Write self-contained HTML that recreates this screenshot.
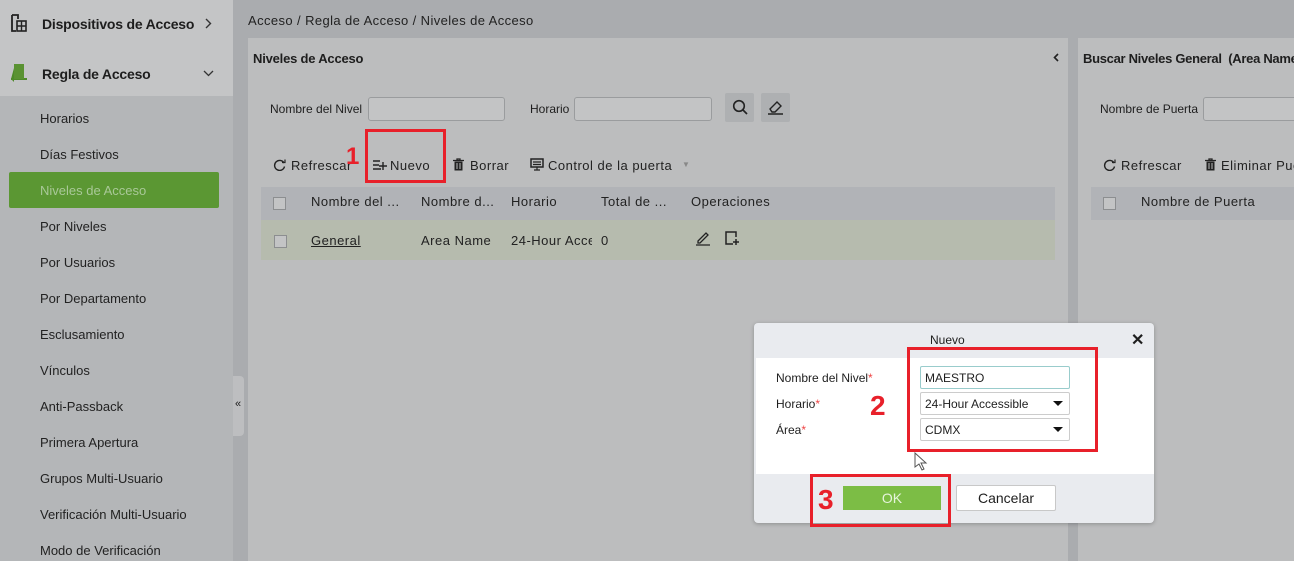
<!DOCTYPE html>
<html><head><meta charset="utf-8"><style>
*{box-sizing:border-box;margin:0;padding:0}
body{width:1294px;height:561px;overflow:hidden;background:#aaacaf;font-family:"Liberation Sans",sans-serif;color:#1e1e1e;position:relative;font-size:13px}
.a{position:absolute}
.side{left:0;top:0;width:233px;height:561px;background:#b4b6b8}
.sh{left:0;width:233px;height:48px;background:#c4c5c6;font-size:14px;font-weight:bold;color:#222}
.si{left:40px;font-size:13px;color:#222}
.panel{background:#bcbdbe}
.inp{background:#c3c4c5;border:1px solid #9a9c9e;border-radius:3px;height:24px}
.tb{letter-spacing:.5px;font-size:13px;color:#222;white-space:nowrap}
.chk{width:13px;height:13px;border:1px solid #8c8e90;background:#c3c4c5}
.red{border:3px solid #e8202a}
.num{color:#e8202a;font-weight:bold}
.lb{font-size:12px;white-space:nowrap}
</style></head><body>
<div class="a side"></div>
<div class="a sh" style="top:0"></div>
<div class="a sh" style="top:48px"></div>
<svg class="a" style="left:10px;top:14px" width="18" height="18" viewBox="0 0 18 18"><path d="M2 1h6v4M2 1v16h4" fill="none" stroke="#222" stroke-width="1.8"/><rect x="7" y="7" width="9" height="10" fill="none" stroke="#222" stroke-width="1.6"/><path d="M7 12h9M11.5 7v10" stroke="#222" stroke-width="1.4"/></svg>
<div class="a" style="left:42px;top:16px;font-size:14px;font-weight:bold;letter-spacing:-.2px">Dispositivos de Acceso</div>
<svg class="a" style="left:205px;top:18px" width="7" height="11"><path d="M1 1l4.5 4.5L1 10" fill="none" stroke="#333" stroke-width="1.4"/></svg>
<svg class="a" style="left:10px;top:63px" width="18" height="20" viewBox="0 0 18 20"><path d="M1 16h16" stroke="#4e8a2a" stroke-width="2"/><rect x="4" y="1" width="10" height="15" fill="#5a9232"/><path d="M1 16l3 3V5" fill="#4e8a2a"/></svg>
<div class="a" style="left:42px;top:66px;font-size:14px;font-weight:bold;letter-spacing:-.2px">Regla de Acceso</div>
<svg class="a" style="left:203px;top:70px" width="11" height="7"><path d="M1 1l4.5 4.5L10 1" fill="none" stroke="#333" stroke-width="1.3"/></svg>
<div class="a si" style="top:111px">Horarios</div>
<div class="a si" style="top:147px">Días Festivos</div>
<div class="a" style="left:9px;top:172px;width:210px;height:36px;background:#5b9733;border-radius:2px"></div>
<div class="a si" style="top:183px;color:#a9c898">Niveles de Acceso</div>
<div class="a si" style="top:219px">Por Niveles</div>
<div class="a si" style="top:255px">Por Usuarios</div>
<div class="a si" style="top:291px">Por Departamento</div>
<div class="a si" style="top:327px">Esclusamiento</div>
<div class="a si" style="top:363px">Vínculos</div>
<div class="a si" style="top:399px">Anti-Passback</div>
<div class="a si" style="top:435px">Primera Apertura</div>
<div class="a si" style="top:471px">Grupos Multi-Usuario</div>
<div class="a si" style="top:507px">Verificación Multi-Usuario</div>
<div class="a si" style="top:543px">Modo de Verificación</div>
<div class="a" style="left:233px;top:376px;width:11px;height:60px;background:#bdbec0;border-radius:0 4px 4px 0"></div>
<div class="a" style="left:235px;top:398px;font-size:11px">«</div>

<div class="a tb" style="left:248px;top:13px;letter-spacing:.4px">Acceso / Regla de Acceso / Niveles de Acceso</div>
<div class="a panel" style="left:248px;top:38px;width:820px;height:523px"></div>
<div class="a panel" style="left:1078px;top:38px;width:216px;height:523px"></div>
<div class="a" style="left:253px;top:51px;font-weight:bold;font-size:13px;letter-spacing:-.2px">Niveles de Acceso</div>
<svg class="a" style="left:1053px;top:53px" width="6" height="9"><path d="M5 1L1.5 4.5 5 8" fill="none" stroke="#222" stroke-width="1.6"/></svg>
<div class="a lb" style="left:270px;top:102px">Nombre del Nivel</div>
<div class="a inp" style="left:368px;top:97px;width:137px"></div>
<div class="a lb" style="left:530px;top:102px">Horario</div>
<div class="a inp" style="left:574px;top:97px;width:138px"></div>
<div class="a" style="left:725px;top:93px;width:29px;height:29px;background:#aeb0b2;border-radius:2px"></div>
<svg class="a" style="left:732px;top:99px" width="16" height="16"><circle cx="7" cy="7" r="5.3" fill="none" stroke="#222" stroke-width="1.6"/><path d="M11 11l4 4" stroke="#222" stroke-width="1.7"/></svg>
<div class="a" style="left:761px;top:93px;width:29px;height:29px;background:#aeb0b2;border-radius:2px"></div>
<svg class="a" style="left:767px;top:99px" width="17" height="16"><path d="M3 10l7-7 4 4-6 6H5zM1 15h15" fill="none" stroke="#222" stroke-width="1.4"/></svg>

<svg class="a" style="left:273px;top:158px" width="13" height="13"><path d="M11 5A5 5 0 1 0 11.5 8.5" fill="none" stroke="#222" stroke-width="1.4"/><path d="M9 4.5h3V1.5" fill="none" stroke="#222" stroke-width="1.2"/></svg>
<div class="a tb" style="left:291px;top:158px">Refrescar</div>
<svg class="a" style="left:372px;top:159px" width="15" height="12"><path d="M1 2h7M1 6h6M1 10h8M11 3v8M7 7h8" stroke="#222" stroke-width="1.4"/></svg>
<div class="a tb" style="left:390px;top:158px">Nuevo</div>
<svg class="a" style="left:453px;top:158px" width="11" height="13"><path d="M0 2.5h11M4 2.5V1h3v1.5" fill="none" stroke="#222" stroke-width="1.3"/><rect x="1.5" y="3.5" width="8" height="9" fill="#222"/><path d="M4 5v6M7 5v6" stroke="#bcbdbe" stroke-width="1"/></svg>
<div class="a tb" style="left:470px;top:158px">Borrar</div>
<svg class="a" style="left:530px;top:158px" width="14" height="13"><rect x="1" y="1" width="12" height="8" fill="none" stroke="#222" stroke-width="1.5"/><path d="M3 4h8M3 6.5h8M4 12h6M7 9v3" stroke="#222" stroke-width="1.2"/></svg>
<div class="a tb" style="left:548px;top:158px">Control de la puerta</div>
<div class="a" style="left:682px;top:160px;color:#888;font-size:8px">▼</div>

<div class="a" style="left:261px;top:187px;width:794px;height:33px;background:#b1b3b7"></div>
<div class="a" style="left:261px;top:220px;width:794px;height:40px;background:#b6bbae"></div>
<div class="a chk" style="left:273px;top:197px"></div>
<div class="a chk" style="left:274px;top:235px"></div>
<div class="a tb" style="left:311px;top:194px">Nombre del ...</div>
<div class="a tb" style="left:421px;top:194px">Nombre d...</div>
<div class="a tb" style="left:511px;top:194px">Horario</div>
<div class="a tb" style="left:601px;top:194px">Total de ...</div>
<div class="a tb" style="left:691px;top:194px">Operaciones</div>
<div class="a tb" style="left:311px;top:233px;text-decoration:underline">General</div>
<div class="a tb" style="left:421px;top:233px">Area Name</div>
<div class="a tb" style="left:511px;top:233px;width:81px;overflow:hidden">24-Hour Accessible</div>
<div class="a tb" style="left:601px;top:233px">0</div>
<svg class="a" style="left:695px;top:230px" width="16" height="16"><path d="M3 11l8-8 2 2-8 8H3zM1 15h14" fill="none" stroke="#222" stroke-width="1.3"/></svg>
<svg class="a" style="left:724px;top:230px" width="17" height="17"><path d="M9 14H2V2h10v5" fill="none" stroke="#222" stroke-width="1.5"/><path d="M12 9v6M9 12h6" stroke="#222" stroke-width="1.5"/></svg>

<div class="a" style="left:1083px;top:51px;font-weight:bold;white-space:nowrap;font-size:13px;letter-spacing:-.3px">Buscar Niveles General&nbsp; (Area Name)</div>
<div class="a lb" style="left:1100px;top:102px">Nombre de Puerta</div>
<div class="a inp" style="left:1203px;top:97px;width:110px"></div>
<svg class="a" style="left:1103px;top:158px" width="13" height="13"><path d="M11 5A5 5 0 1 0 11.5 8.5" fill="none" stroke="#222" stroke-width="1.4"/><path d="M9 4.5h3V1.5" fill="none" stroke="#222" stroke-width="1.2"/></svg>
<div class="a tb" style="left:1121px;top:158px">Refrescar</div>
<svg class="a" style="left:1205px;top:158px" width="11" height="13"><path d="M0 2.5h11M4 2.5V1h3v1.5" fill="none" stroke="#222" stroke-width="1.3"/><rect x="1.5" y="3.5" width="8" height="9" fill="#222"/><path d="M4 5v6M7 5v6" stroke="#bcbdbe" stroke-width="1"/></svg>
<div class="a tb" style="left:1221px;top:158px">Eliminar Puerta</div>
<div class="a" style="left:1091px;top:187px;width:210px;height:33px;background:#b1b3b7"></div>
<div class="a chk" style="left:1103px;top:197px"></div>
<div class="a tb" style="left:1141px;top:194px">Nombre de Puerta</div>

<div class="a red" style="left:365px;top:129px;width:81px;height:54px"></div>
<div class="a num" style="left:346px;top:143px;font-size:24px">1</div>

<div class="a" style="left:754px;top:323px;width:400px;height:200px;background:#e9ebef;border-radius:4px;box-shadow:0 1px 4px rgba(0,0,0,.25)"></div>
<div class="a" style="left:756px;top:358px;width:398px;height:116px;background:#fff"></div>
<div class="a" style="left:930px;top:333px;font-size:12px">Nuevo</div>
<div class="a" style="left:1131px;top:330px;font-size:16px;font-weight:bold">✕</div>
<div class="a" style="left:776px;top:371px;font-size:12px">Nombre del Nivel<span style="color:#e44">*</span></div>
<div class="a" style="left:776px;top:397px;font-size:12px">Horario<span style="color:#e44">*</span></div>
<div class="a" style="left:776px;top:423px;font-size:12px">Área<span style="color:#e44">*</span></div>
<div class="a" style="left:920px;top:366px;width:150px;height:23px;border:1px solid #9cc;border-radius:2px;padding:4px 4px;font-size:12px">MAESTRO</div>
<div class="a" style="left:920px;top:392px;width:150px;height:23px;border:1px solid #ccc;border-radius:2px;padding:4px 4px;font-size:12px">24-Hour Accessible</div>
<div class="a" style="left:920px;top:418px;width:150px;height:23px;border:1px solid #ccc;border-radius:2px;padding:4px 4px;font-size:12px">CDMX</div>
<svg class="a" style="left:1053px;top:401px" width="10" height="6"><path d="M0 0h10L5 5z" fill="#111"/></svg>
<svg class="a" style="left:1053px;top:427px" width="10" height="6"><path d="M0 0h10L5 5z" fill="#111"/></svg>
<div class="a red" style="left:907px;top:347px;width:191px;height:105px"></div>
<div class="a num" style="left:870px;top:390px;font-size:28px">2</div>
<svg class="a" style="left:914px;top:452px" width="14" height="20"><path d="M1 1v14l4-3 3 6 2-1-3-6h5z" fill="#fff" stroke="#555"/></svg>
<div class="a" style="left:843px;top:486px;width:98px;height:24px;background:#7cbd45;color:#e6f4dc;font-size:14px;text-align:center;line-height:24px">OK</div>
<div class="a" style="left:956px;top:485px;width:100px;height:26px;background:#fff;border:1px solid #c8c8c8;border-radius:2px;font-size:14px;text-align:center;line-height:24px">Cancelar</div>
<div class="a red" style="left:810px;top:474px;width:141px;height:53px"></div>
<div class="a num" style="left:818px;top:484px;font-size:28px">3</div>
</body></html>
